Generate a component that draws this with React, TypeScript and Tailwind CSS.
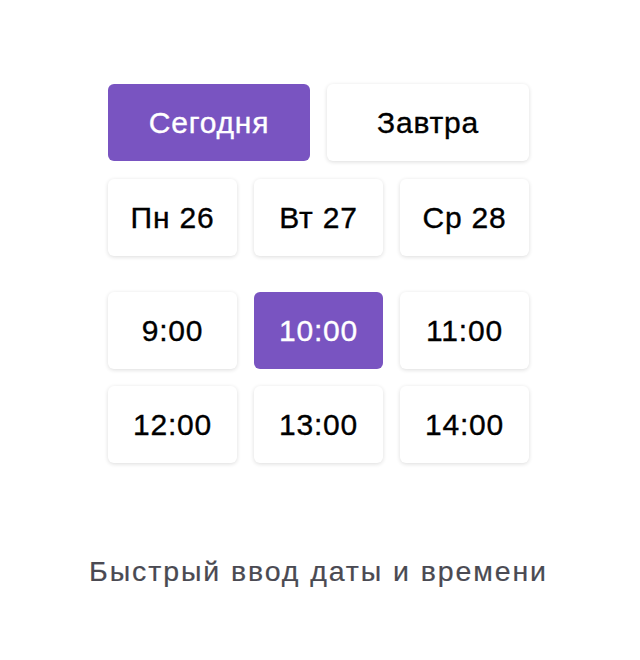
import React from "react";

const purple = "bg-[#7954c1] text-white";
const white = "bg-white text-black shadow-[0_1px_4px_rgba(0,0,0,0.14)]";

function Btn({ label, active, w }: { label: string; active?: boolean; w: string }) {
  return (
    <div
      className={`${w} h-[77px] rounded-[6px] flex items-center justify-center text-[30px] tracking-[0.8px] [-webkit-text-stroke:0.35px_currentColor] ${active ? purple : white}`}
    >
      {label}
    </div>
  );
}

export default function App() {
  const font = { fontFamily: '"Liberation Sans", Arial, sans-serif' };
  return (
    <div className="w-[640px] h-[660px] bg-white flex flex-col items-center pt-[84px] pr-[3px]" style={font}>
      <div className="flex gap-[17px]">
        <Btn label="Сегодня" active w="w-[202px]" />
        <Btn label="Завтра" w="w-[202px]" />
      </div>
      <div className="flex gap-[17px] mt-[18px]">
        <Btn label="Пн 26" w="w-[129px]" />
        <Btn label="Вт 27" w="w-[129px]" />
        <Btn label="Ср 28" w="w-[129px]" />
      </div>
      <div className="flex gap-[17px] mt-[36px]">
        <Btn label="9:00" w="w-[129px]" />
        <Btn label="10:00" active w="w-[129px]" />
        <Btn label="11:00" w="w-[129px]" />
      </div>
      <div className="flex gap-[17px] mt-[17px]">
        <Btn label="12:00" w="w-[129px]" />
        <Btn label="13:00" w="w-[129px]" />
        <Btn label="14:00" w="w-[129px]" />
      </div>
      <div className="mt-[88px] text-[28.5px] tracking-[1.9px] text-[#4a4a52] leading-[40px] [-webkit-text-stroke:0.2px_currentColor]">Быстрый ввод даты и времени</div>
    </div>
  );
}
